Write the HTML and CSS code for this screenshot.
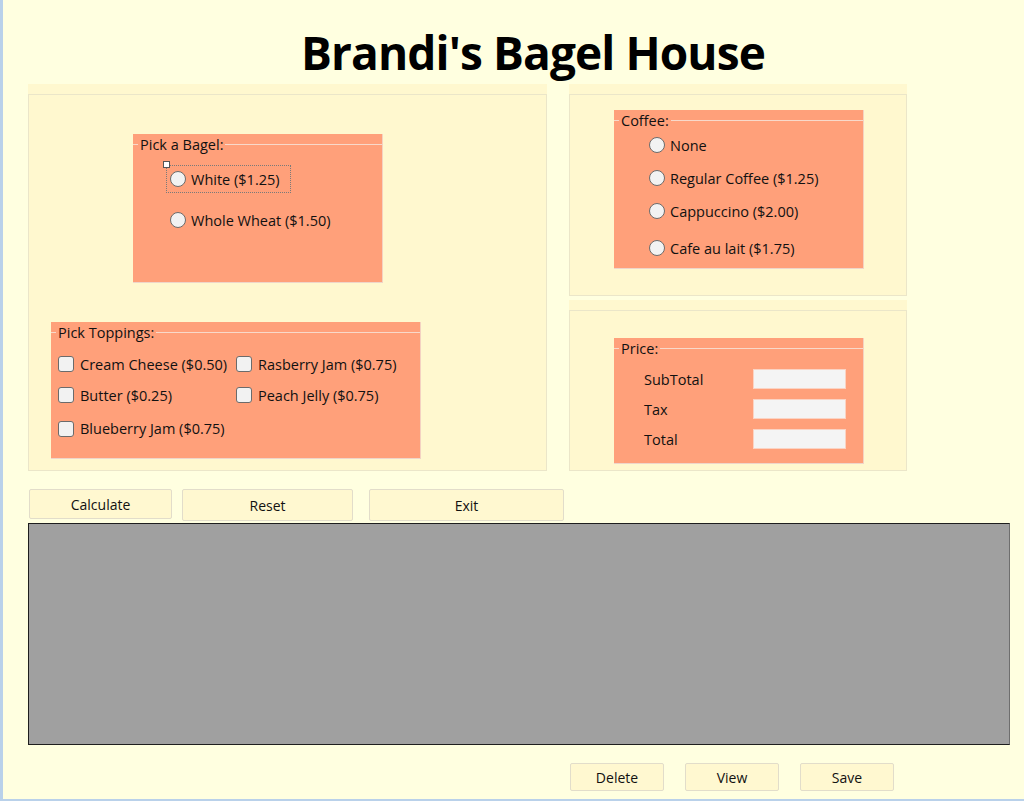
FILE: index.html
```html
<!DOCTYPE html>
<html lang="en">
<head>
    <meta charset="UTF-8">
    <title>Brandi's Bagel House</title>
    <link rel="stylesheet" href="styles.css">
</head>
<body>
    <div class="window">
        <h1 class="title">Brandi's Bagel House</h1>

        <div class="top-row">
            <div class="panel panel-order">
                <div class="panel-frame">
                    <div class="group group-bagel">
                        <div class="legend"><span>Pick a Bagel:</span></div>
                        <div class="bagel-list">
                            <label class="opt focused">
                                <span class="handle"></span>
                                <input type="radio" name="bagel"> White ($1.25)
                            </label>
                            <label class="opt">
                                <input type="radio" name="bagel"> Whole Wheat ($1.50)
                            </label>
                        </div>
                    </div>

                    <div class="group group-toppings">
                        <div class="legend"><span>Pick Toppings:</span></div>
                        <div class="topping-grid">
                            <label class="chk"><input type="checkbox"> Cream Cheese ($0.50)</label>
                            <label class="chk"><input type="checkbox"> Rasberry Jam ($0.75)</label>
                            <label class="chk"><input type="checkbox"> Butter ($0.25)</label>
                            <label class="chk"><input type="checkbox"> Peach Jelly ($0.75)</label>
                            <label class="chk last"><input type="checkbox"> Blueberry Jam ($0.75)</label>
                        </div>
                    </div>
                </div>
            </div>

            <div class="side">
                <div class="panel panel-coffee">
                    <div class="panel-frame">
                        <div class="group group-coffee">
                            <div class="legend"><span>Coffee:</span></div>
                            <div class="coffee-list">
                                <label class="opt"><input type="radio" name="coffee"> None</label>
                                <label class="opt"><input type="radio" name="coffee"> Regular Coffee ($1.25)</label>
                                <label class="opt"><input type="radio" name="coffee"> Cappuccino ($2.00)</label>
                                <label class="opt last"><input type="radio" name="coffee"> Cafe au lait ($1.75)</label>
                            </div>
                        </div>
                    </div>
                </div>

                <div class="panel panel-price">
                    <div class="panel-frame">
                        <div class="group group-price">
                            <div class="legend"><span>Price:</span></div>
                            <div class="price-grid">
                                <span>SubTotal</span><input type="text" class="txt" readonly>
                                <span>Tax</span><input type="text" class="txt" readonly>
                                <span>Total</span><input type="text" class="txt" readonly>
                            </div>
                        </div>
                    </div>
                </div>
            </div>
        </div>

        <div class="actions">
            <button class="btn btn-calc">Calculate</button>
            <button class="btn btn-reset">Reset</button>
            <button class="btn btn-exit">Exit</button>
        </div>

        <div class="order-list"></div>

        <div class="file-actions">
            <button class="btn btn-small">Delete</button>
            <button class="btn btn-small">View</button>
            <button class="btn btn-small">Save</button>
        </div>
    </div>
</body>
</html>
```

FILE: styles.css
```css
html, body {
    margin: 0;
    padding: 0;
}
body {
    background-color: #ffffe0;
    font-family: "Open Sans", "Noto Sans", Arial, sans-serif;
    font-size: 14.5px;
    color: #111;
    width: 1024px;
    height: 801px;
    box-sizing: border-box;
    border-left: 3px solid #b9d1ea;
    border-bottom: 2px solid #b9d1ea;
    overflow: hidden;
}
.window {
    padding-left: 25px;
}
.title {
    margin: 0;
    height: 84px;
    box-sizing: border-box;
    padding: 29px 0 0 14px;
    font-size: 46px;
    line-height: 46px;
    font-weight: 700;
    text-align: center;
    letter-spacing: -0.9px;
    color: #000;
}

/* panels holding the order groups */
.top-row {
    display: flex;
    gap: 22px;
    height: 387px;
}
.panel {
    background-color: #fff8cf;
    padding-top: 10px;
    box-sizing: border-box;
    display: flex;
}
.panel-frame {
    flex: 1;
    border: 1px solid #ebe6c9;
}
.panel-order {
    width: 519px;
}
.side {
    width: 338px;
    display: flex;
    flex-direction: column;
    gap: 4px;
}
.panel-coffee {
    height: 212px;
}
.panel-price {
    height: 171px;
}

/* salmon group boxes */
.group {
    background-color: #ffa07a;
    box-sizing: border-box;
    border-right: 1px solid #f4d2c2;
    border-bottom: 1px solid #efd6ca;
}
.legend {
    display: flex;
    align-items: center;
    height: 20px;
}
.legend::before,
.legend::after {
    content: "";
    height: 1px;
    background-color: #f8d9ca;
}
.legend::before {
    width: 5px;
}
.legend::after {
    flex: 1;
}
.legend span {
    padding: 2px 2px 0;
    line-height: 20px;
}
.group-bagel {
    width: 250px;
    height: 149px;
    margin: 39px 0 0 104px;
}
.group-toppings {
    width: 370px;
    height: 137px;
    margin: 39px 0 0 22px;
}
.group-coffee {
    width: 250px;
    height: 159px;
    margin: 15px 0 0 44px;
}
.group-price {
    width: 250px;
    height: 126px;
    margin: 27px 0 0 44px;
}

/* radio buttons and check boxes */
input[type="radio"],
input[type="checkbox"] {
    appearance: none;
    -webkit-appearance: none;
    margin: 0;
    width: 16px;
    height: 16px;
    box-sizing: border-box;
    border: 1px solid #6b6b6b;
    background-color: #f2f2f2;
    flex-shrink: 0;
}
input[type="radio"] {
    border-radius: 50%;
}
input[type="checkbox"] {
    border-radius: 3px;
}
.opt,
.chk {
    display: inline-flex;
    align-items: center;
    gap: 5px;
    white-space: nowrap;
}
.bagel-list {
    display: flex;
    flex-direction: column;
    align-items: flex-start;
    gap: 13px;
    padding: 11px 0 0 33px;
}
.bagel-list .opt {
    position: relative;
    height: 28px;
    box-sizing: border-box;
    padding: 0 10px 0 3px;
    border: 1px dotted transparent;
}
.bagel-list .opt.focused {
    border-color: #7a7a7a;
}
.handle {
    position: absolute;
    left: -4px;
    top: -5px;
    width: 5px;
    height: 5px;
    background-color: #fff;
    border: 1px solid #555;
}
.coffee-list {
    display: flex;
    flex-direction: column;
    align-items: flex-start;
    gap: 9px;
    padding: 3px 0 0 35px;
}
.coffee-list .opt {
    height: 24px;
}
.coffee-list .opt.last {
    margin-top: 4px;
}
.topping-grid {
    display: grid;
    grid-template-columns: 178px auto;
    grid-auto-rows: 20px;
    row-gap: 11px;
    padding: 12px 0 0 7px;
}
.topping-grid .chk {
    gap: 6px;
}
.topping-grid .chk.last {
    margin-top: 5px;
}

/* price read-outs */
.price-grid {
    display: grid;
    grid-template-columns: 109px 93px;
    grid-auto-rows: 20px;
    row-gap: 10px;
    align-items: center;
    padding: 11px 0 0 30px;
}
.txt {
    width: 93px;
    height: 20px;
    box-sizing: border-box;
    border: 1px solid #fbd3c3;
    background-color: #f4f4f4;
    margin: 0;
    padding: 0;
}

/* buttons */
.btn {
    font-family: inherit;
    font-size: 14px;
    color: #111;
    background-color: #fff8d0;
    border: 1px solid #e2ddca;
    border-radius: 2px;
    padding: 0;
    margin: 0;
}
.actions {
    display: flex;
    align-items: flex-start;
    margin-top: 18px;
}
.btn-calc {
    width: 143px;
    height: 30px;
    margin-left: 1px;
}
.btn-reset {
    width: 171px;
    height: 32px;
    margin-left: 10px;
}
.btn-exit {
    width: 195px;
    height: 32px;
    margin-left: 16px;
}
.order-list {
    width: 982px;
    height: 222px;
    box-sizing: border-box;
    margin-top: 2px;
    background-color: #a0a0a0;
    border: 1px solid #1e1e1e;
    border-right-color: #6e6e6e;
}
.file-actions {
    display: flex;
    gap: 21px;
    margin: 18px 0 0 542px;
}
.btn-small {
    width: 94px;
    height: 28px;
}
```
